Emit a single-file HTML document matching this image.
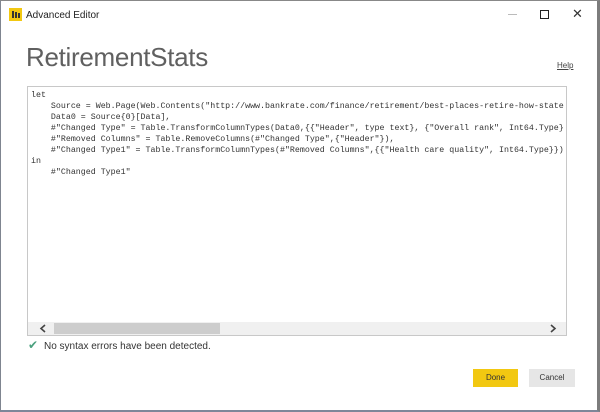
<!DOCTYPE html>
<html><head><meta charset="utf-8"><style>
*{margin:0;padding:0;box-sizing:border-box}
body{width:600px;height:412px;overflow:hidden;background:#fff;font-family:"Liberation Sans",sans-serif}
.win{position:absolute;left:0;top:0;width:600px;height:412px;border:1px solid #7f8590;border-right:3px solid #7c7c7c;border-bottom:2px solid #7d8699;border-top:1px solid #888}
.abs{position:absolute}
pre{font-family:"Liberation Mono",monospace;font-size:8.3px;line-height:11px;color:#333;white-space:pre}
</style></head><body>
<div class="win"></div>
<div class="abs" style="left:9px;top:8px;width:13px;height:13px;background:#f2c811"></div>
<div class="abs" style="left:12px;top:11px;width:2px;height:7px;background:#333"></div>
<div class="abs" style="left:15px;top:12px;width:2px;height:6px;background:#333"></div>
<div class="abs" style="left:18px;top:13px;width:2px;height:5px;background:#333"></div>
<div class="abs" style="left:26px;top:10px;font-size:10px;color:#222">Advanced Editor</div>
<div class="abs" style="left:508px;top:14px;width:9px;height:1px;background:#bbb"></div>
<div class="abs" style="left:540px;top:10px;width:9px;height:9px;border:1px solid #222"></div>
<div class="abs" style="left:572px;top:6px;font-size:13px;color:#333">✕</div>
<div class="abs" style="left:26px;top:42px;font-size:26px;color:#606060;letter-spacing:-0.3px">RetirementStats</div>
<div class="abs" style="left:557px;top:61px;font-size:8px;color:#444;text-decoration:underline">Help</div>
<div class="abs" style="left:27px;top:86px;width:540px;height:250px;border:1px solid #c8c8c8;overflow:hidden">
<pre class="abs" style="left:3px;top:3px">let
    Source = Web.Page(Web.Contents("http://www.bankrate.com/finance/retirement/best-places-retire-how-state
    Data0 = Source{0}[Data],
    #"Changed Type" = Table.TransformColumnTypes(Data0,{{"Header", type text}, {"Overall rank", Int64.Type}
    #"Removed Columns" = Table.RemoveColumns(#"Changed Type",{"Header"}),
    #"Changed Type1" = Table.TransformColumnTypes(#"Removed Columns",{{"Health care quality", Int64.Type}})
in
    #"Changed Type1"</pre>
<div class="abs" style="left:0;top:235px;width:538px;height:13px;background:#f0f0f0"></div>
<div class="abs" style="left:26px;top:236px;width:166px;height:11px;background:#cdcdcd"></div>
<svg class="abs" style="left:11px;top:237px" width="8" height="9"><path d="M6 1L2 4.5L6 8" stroke="#444" stroke-width="1.6" fill="none"/></svg>
<svg class="abs" style="left:521px;top:237px" width="8" height="9"><path d="M2 1L6 4.5L2 8" stroke="#444" stroke-width="1.6" fill="none"/></svg>
</div>
<div class="abs" style="left:28px;top:338px;font-size:12px;color:#4aa07e">✔</div>
<div class="abs" style="left:44px;top:341px;font-size:10px;color:#333">No syntax errors have been detected.</div>
<div class="abs" style="left:473px;top:369px;width:45px;height:18px;background:#f2c811;font-size:8px;color:#333;text-align:center;line-height:18px">Done</div>
<div class="abs" style="left:529px;top:369px;width:46px;height:18px;background:#e6e6e6;font-size:8px;color:#333;text-align:center;line-height:18px">Cancel</div>
</body></html>
